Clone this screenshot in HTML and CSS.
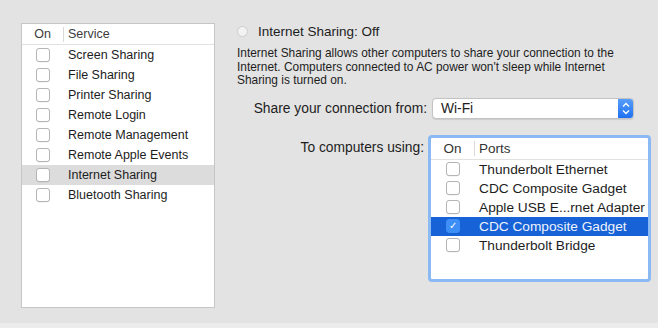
FILE: index.html
```html
<!DOCTYPE html>
<html lang="en">
<head>
    <meta charset="UTF-8">
    <title>Sharing</title>
    <link rel="stylesheet" href="styles.css">
</head>
<body>
    <div class="pane">
        <div class="service-list">
            <div class="list-head">
                <span class="col-on">On</span>
                <span class="col-name">Service</span>
            </div>
            <div class="list-row"><span class="col-on"><span class="check"></span></span><span class="col-name">Screen Sharing</span></div>
            <div class="list-row"><span class="col-on"><span class="check"></span></span><span class="col-name">File Sharing</span></div>
            <div class="list-row"><span class="col-on"><span class="check"></span></span><span class="col-name">Printer Sharing</span></div>
            <div class="list-row"><span class="col-on"><span class="check"></span></span><span class="col-name">Remote Login</span></div>
            <div class="list-row"><span class="col-on"><span class="check"></span></span><span class="col-name">Remote Management</span></div>
            <div class="list-row"><span class="col-on"><span class="check"></span></span><span class="col-name">Remote Apple Events</span></div>
            <div class="list-row current"><span class="col-on"><span class="check"></span></span><span class="col-name">Internet Sharing</span></div>
            <div class="list-row"><span class="col-on"><span class="check"></span></span><span class="col-name">Bluetooth Sharing</span></div>
        </div>

        <div class="detail">
            <div class="status">
                <span class="radio"></span>
                <span>Internet Sharing: Off</span>
            </div>
            <p class="about">Internet Sharing allows other computers to share your connection to the<br>Internet. Computers connected to AC power won't sleep while Internet<br>Sharing is turned on.</p>

            <div class="form">
                <label class="form-label">Share your connection from:</label>
                <div class="popup">
                    <span class="popup-value">Wi-Fi</span>
                    <span class="stepper">
                        <svg width="16" height="21" viewBox="0 0 16 21">
                            <path d="M5 8.5 L8 5.5 L11 8.5" fill="none" stroke="#fff" stroke-width="1.3"/>
                            <path d="M5 12.5 L8 15.5 L11 12.5" fill="none" stroke="#fff" stroke-width="1.3"/>
                        </svg>
                    </span>
                </div>

                <label class="form-label top">To computers using:</label>
                <div class="ports">
                    <div class="ports-inner">
                        <div class="list-head">
                            <span class="col-on">On</span>
                            <span class="col-name">Ports</span>
                        </div>
                        <div class="port-row"><span class="col-on"><span class="check"></span></span><span class="col-name">Thunderbolt Ethernet</span></div>
                        <div class="port-row"><span class="col-on"><span class="check"></span></span><span class="col-name">CDC Composite Gadget</span></div>
                        <div class="port-row"><span class="col-on"><span class="check"></span></span><span class="col-name">Apple USB E...rnet Adapter</span></div>
                        <div class="port-row selected"><span class="col-on"><span class="check on">&#10003;</span></span><span class="col-name">CDC Composite Gadget</span></div>
                        <div class="port-row"><span class="col-on"><span class="check"></span></span><span class="col-name">Thunderbolt Bridge</span></div>
                    </div>
                </div>
            </div>
        </div>
    </div>
</body>
</html>
```

FILE: styles.css
```css
body {
    margin: 0;
    background-color: #e3e3e3;
    font-family: 'Liberation Sans', Arial, sans-serif;
    color: #1d1d1d;
}

.pane {
    display: flex;
    height: 323px;
    border-bottom: 5px solid #ececec;
    box-sizing: content-box;
}

/* services list on the left */
.service-list {
    margin: 23px 0 0 21px;
    width: 192px;
    height: 283px;
    border: 1px solid #c6c6c6;
    background-color: white;
    font-size: 12.5px;
}

.list-head {
    display: flex;
    align-items: center;
    height: 20px;
    border-bottom: 1px solid #e2e2e2;
    color: #3c3c3c;
    font-size: 12.5px;
}

.col-on {
    width: 41px;
    display: flex;
    justify-content: center;
    flex-shrink: 0;
}

.list-head .col-name {
    border-left: 1px solid #d9d9d9;
    padding-left: 4px;
    line-height: 15px;
}

.list-row {
    display: flex;
    align-items: center;
    height: 20px;
}

.list-row .col-name,
.port-row .col-name {
    padding-left: 5px;
}

.list-row.current {
    background-color: #dcdcdc;
}

.check {
    width: 12px;
    height: 12px;
    border: 1px solid #b4b4b4;
    border-radius: 3px;
    background-color: white;
    box-shadow: 0 0.5px 0.5px rgba(0, 0, 0, 0.08);
}

.check.on {
    background-color: #3d8ef7;
    border-color: #3d8ef7;
    color: white;
    font-size: 10px;
    line-height: 12px;
    text-align: center;
}

/* right side */
.detail {
    margin-left: 22px;
    padding-top: 24px;
}

.status {
    display: flex;
    align-items: center;
    font-size: 13.5px;
    height: 15px;
}

.radio {
    width: 9px;
    height: 9px;
    border: 1px solid #cdcdcd;
    border-radius: 50%;
    background-color: #f2f2f2;
    margin-right: 10px;
}

.about {
    margin: 8px 0 0 0;
    font-size: 11.9px;
    line-height: 13.5px;
}

.form {
    display: grid;
    grid-template-columns: 190px auto;
    column-gap: 5px;
    row-gap: 16px;
    margin-top: 10px;
    font-size: 13.8px;
}

.form-label {
    text-align: right;
    align-self: center;
}

.form-label.top {
    align-self: start;
    padding-top: 5px;
    padding-right: 3px;
}

.popup {
    width: 200px;
    height: 19px;
    border: 1px solid #c3c3c3;
    border-radius: 4px;
    background-color: white;
    display: flex;
    align-items: center;
    justify-content: space-between;
    box-shadow: 0 0.5px 1px rgba(0, 0, 0, 0.1);
    overflow: hidden;
}

.popup-value {
    padding-left: 8px;
}

.stepper {
    width: 16px;
    height: 21px;
    margin-right: -1px;
    background: linear-gradient(#5aa0fa, #1b6ef2);
    display: flex;
}

.ports {
    margin-left: -4px;
    width: 217px;
    height: 141px;
    border: 3px solid #8bb9f4;
    border-radius: 4px;
    background-color: white;
}

.ports-inner .list-head {
    height: 21px;
    color: #333;
    font-size: 13.5px;
}

.ports-inner .col-on {
    width: 43px;
}

.port-row {
    display: flex;
    align-items: center;
    height: 19px;
    font-size: 13.7px;
}

.port-row.selected {
    background-color: #1662d6;
    color: #eef3fc;
}
```
